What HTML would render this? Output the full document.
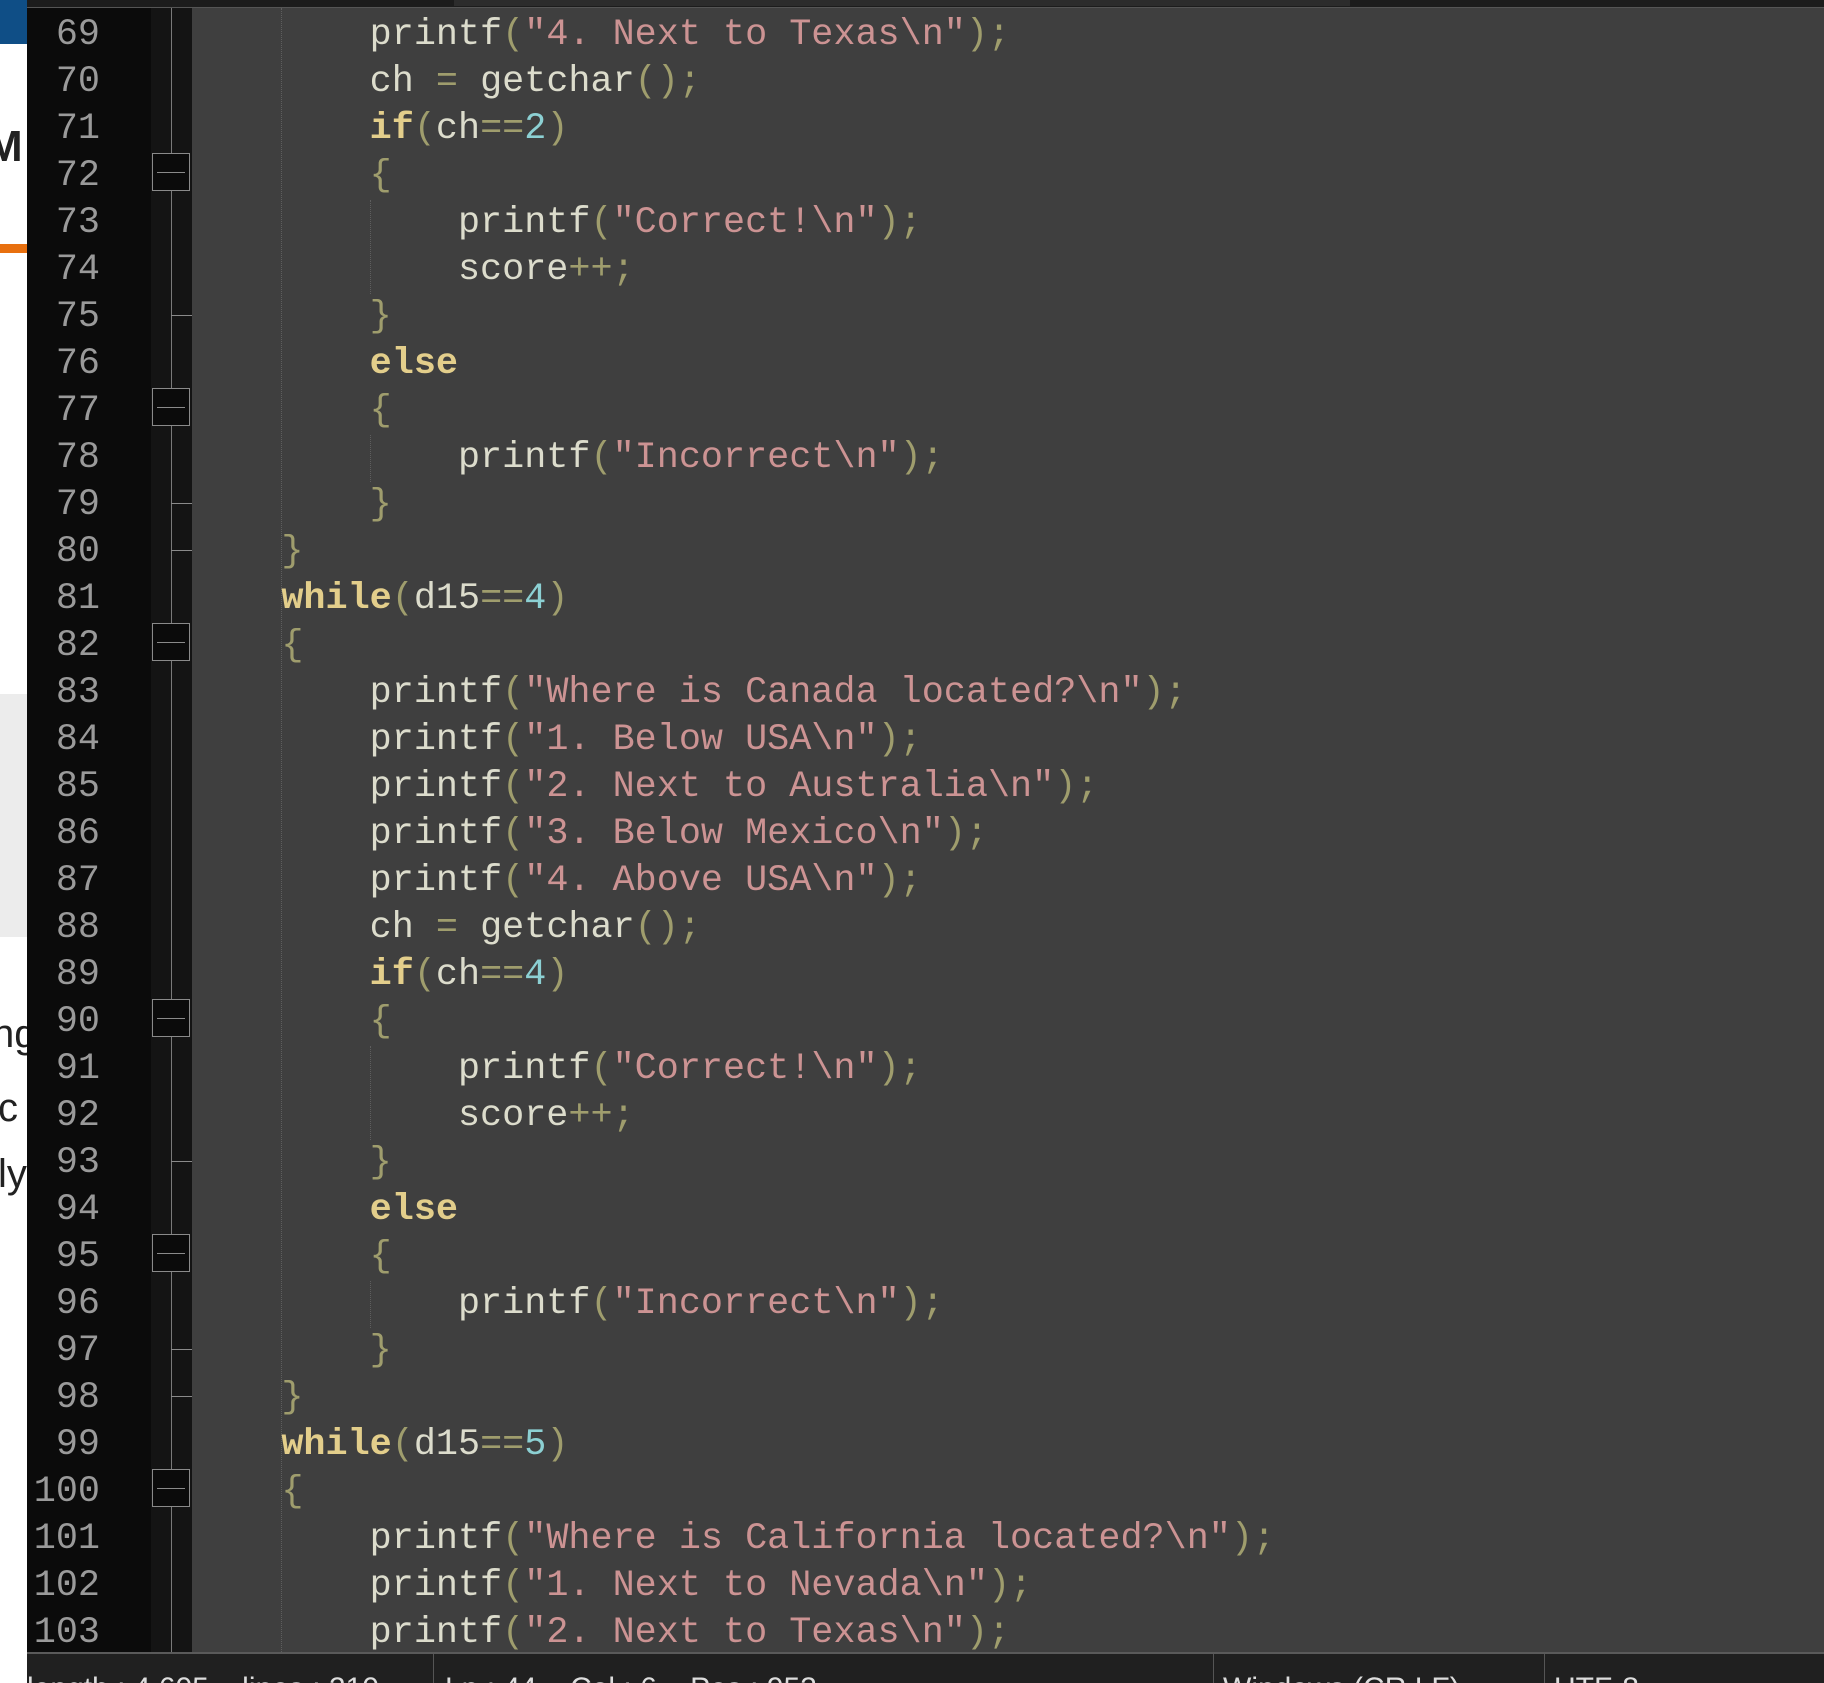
<!DOCTYPE html>
<html><head><meta charset="utf-8">
<style>
html,body{margin:0;padding:0;}
body{width:1824px;height:1683px;overflow:hidden;background:#3f3f3f;position:relative;font-family:"Liberation Mono",monospace;}
.abs{position:absolute;}
#left{left:0;top:0;width:27px;height:1683px;background:#fff;overflow:hidden;}
#gut{left:27px;top:8px;width:124px;height:1644px;background:#0b0b0b;}
#fold{left:151px;top:8px;width:41px;height:1644px;background:#141414;}
#code{left:192px;top:8px;width:1632px;height:1644px;background:#3f3f3f;}
#rows{position:absolute;left:0;top:4px;width:1824px;height:1648px;overflow:hidden;}
.row{position:absolute;height:47px;line-height:47px;font-size:36.8px;white-space:pre;}
.ln{left:27px;width:73px;text-align:right;color:#9a9a9a;}
.tx{left:193px;color:#dcdccc;}
.k{color:#e3ce8b;font-weight:bold;}
.p{color:#9f9d6d;}
.s{color:#cc9393;}
.n{color:#8cd0d3;}
.guide{position:absolute;width:0;border-left:1px dotted #5e5e5e;}
.fb{position:absolute;left:152px;width:38px;height:38px;border:1px solid #8a8a8a;background:#0b0b0b;box-sizing:border-box;}
.fb::after{content:"";position:absolute;left:4px;right:4px;top:18px;height:1px;background:#8a8a8a;}
.tick{position:absolute;left:171px;width:21px;height:1px;background:#8a8a8a;}
#status{left:27px;top:1652px;width:1797px;height:31px;background:#202020;border-top:2px solid #5a5a5a;box-sizing:border-box;overflow:hidden;}
#status span{position:absolute;top:18px;font-family:"Liberation Sans",sans-serif;font-size:30px;color:#ddd;white-space:pre;}
.sep{position:absolute;top:0;width:1px;height:31px;background:#555;}
</style></head><body>
<div class="abs" id="left">
  <div class="abs" style="left:0;top:0;width:27px;height:44px;background:#0f4e86"></div>
  <div class="abs" style="left:0;top:244px;width:27px;height:9px;background:#e8700f"></div>
  <div class="abs" style="left:0;top:694px;width:27px;height:243px;background:#ececec"></div>
  <div class="abs" style="left:-14px;top:122px;font:bold 44px 'Liberation Sans',sans-serif;color:#222">M</div>
  <div class="abs" style="left:-8px;top:1012px;font:40px 'Liberation Sans',sans-serif;color:#222">ng</div>
  <div class="abs" style="left:-2px;top:1086px;font:40px 'Liberation Sans',sans-serif;color:#222">c</div>
  <div class="abs" style="left:-2px;top:1152px;font:40px 'Liberation Sans',sans-serif;color:#222">ly</div>
</div>
<div class="abs" style="left:27px;top:0;width:1797px;height:8px;background:#1c1c1c;border-bottom:1px solid #555;box-sizing:border-box"></div>
<div class="abs" style="left:454px;top:0;width:896px;height:6px;background:#2c2c2c"></div>
<div class="abs" id="gut"></div>
<div class="abs" id="fold"></div>
<div class="abs" style="left:171px;top:8px;width:1px;height:1644px;background:#7a7a7a"></div>
<div class="abs" id="code"></div>

<div class="guide" style="left:281px;top:8px;height:1644px"></div>
<div class="guide" style="left:370px;top:200px;height:94px"></div>
<div class="guide" style="left:370px;top:435px;height:47px"></div>
<div class="guide" style="left:370px;top:1046px;height:94px"></div>
<div class="guide" style="left:370px;top:1281px;height:47px"></div>

<div class="fb" style="top:153px"></div>
<div class="fb" style="top:388px"></div>
<div class="fb" style="top:623px"></div>
<div class="fb" style="top:999px"></div>
<div class="fb" style="top:1234px"></div>
<div class="fb" style="top:1469px"></div>
<div class="tick" style="top:315px"></div>
<div class="tick" style="top:503px"></div>
<div class="tick" style="top:550px"></div>
<div class="tick" style="top:1161px"></div>
<div class="tick" style="top:1349px"></div>
<div class="tick" style="top:1396px"></div>

<div id="rows">
<div class="row ln" style="top:8px">69</div>
<div class="row ln" style="top:55px">70</div>
<div class="row ln" style="top:102px">71</div>
<div class="row ln" style="top:149px">72</div>
<div class="row ln" style="top:196px">73</div>
<div class="row ln" style="top:243px">74</div>
<div class="row ln" style="top:290px">75</div>
<div class="row ln" style="top:337px">76</div>
<div class="row ln" style="top:384px">77</div>
<div class="row ln" style="top:431px">78</div>
<div class="row ln" style="top:478px">79</div>
<div class="row ln" style="top:525px">80</div>
<div class="row ln" style="top:572px">81</div>
<div class="row ln" style="top:619px">82</div>
<div class="row ln" style="top:666px">83</div>
<div class="row ln" style="top:713px">84</div>
<div class="row ln" style="top:760px">85</div>
<div class="row ln" style="top:807px">86</div>
<div class="row ln" style="top:854px">87</div>
<div class="row ln" style="top:901px">88</div>
<div class="row ln" style="top:948px">89</div>
<div class="row ln" style="top:995px">90</div>
<div class="row ln" style="top:1042px">91</div>
<div class="row ln" style="top:1089px">92</div>
<div class="row ln" style="top:1136px">93</div>
<div class="row ln" style="top:1183px">94</div>
<div class="row ln" style="top:1230px">95</div>
<div class="row ln" style="top:1277px">96</div>
<div class="row ln" style="top:1324px">97</div>
<div class="row ln" style="top:1371px">98</div>
<div class="row ln" style="top:1418px">99</div>
<div class="row ln" style="top:1465px">100</div>
<div class="row ln" style="top:1512px">101</div>
<div class="row ln" style="top:1559px">102</div>
<div class="row ln" style="top:1606px">103</div>

<div class="row tx" style="top:8px">        printf<span class="p">(</span><span class="s">"4. Next to Texas\n"</span><span class="p">);</span></div>
<div class="row tx" style="top:55px">        ch <span class="p">=</span> getchar<span class="p">();</span></div>
<div class="row tx" style="top:102px">        <span class="k">if</span><span class="p">(</span>ch<span class="p">==</span><span class="n">2</span><span class="p">)</span></div>
<div class="row tx" style="top:149px">        <span class="p">{</span></div>
<div class="row tx" style="top:196px">            printf<span class="p">(</span><span class="s">"Correct!\n"</span><span class="p">);</span></div>
<div class="row tx" style="top:243px">            score<span class="p">++;</span></div>
<div class="row tx" style="top:290px">        <span class="p">}</span></div>
<div class="row tx" style="top:337px">        <span class="k">else</span></div>
<div class="row tx" style="top:384px">        <span class="p">{</span></div>
<div class="row tx" style="top:431px">            printf<span class="p">(</span><span class="s">"Incorrect\n"</span><span class="p">);</span></div>
<div class="row tx" style="top:478px">        <span class="p">}</span></div>
<div class="row tx" style="top:525px">    <span class="p">}</span></div>
<div class="row tx" style="top:572px">    <span class="k">while</span><span class="p">(</span>d15<span class="p">==</span><span class="n">4</span><span class="p">)</span></div>
<div class="row tx" style="top:619px">    <span class="p">{</span></div>
<div class="row tx" style="top:666px">        printf<span class="p">(</span><span class="s">"Where is Canada located?\n"</span><span class="p">);</span></div>
<div class="row tx" style="top:713px">        printf<span class="p">(</span><span class="s">"1. Below USA\n"</span><span class="p">);</span></div>
<div class="row tx" style="top:760px">        printf<span class="p">(</span><span class="s">"2. Next to Australia\n"</span><span class="p">);</span></div>
<div class="row tx" style="top:807px">        printf<span class="p">(</span><span class="s">"3. Below Mexico\n"</span><span class="p">);</span></div>
<div class="row tx" style="top:854px">        printf<span class="p">(</span><span class="s">"4. Above USA\n"</span><span class="p">);</span></div>
<div class="row tx" style="top:901px">        ch <span class="p">=</span> getchar<span class="p">();</span></div>
<div class="row tx" style="top:948px">        <span class="k">if</span><span class="p">(</span>ch<span class="p">==</span><span class="n">4</span><span class="p">)</span></div>
<div class="row tx" style="top:995px">        <span class="p">{</span></div>
<div class="row tx" style="top:1042px">            printf<span class="p">(</span><span class="s">"Correct!\n"</span><span class="p">);</span></div>
<div class="row tx" style="top:1089px">            score<span class="p">++;</span></div>
<div class="row tx" style="top:1136px">        <span class="p">}</span></div>
<div class="row tx" style="top:1183px">        <span class="k">else</span></div>
<div class="row tx" style="top:1230px">        <span class="p">{</span></div>
<div class="row tx" style="top:1277px">            printf<span class="p">(</span><span class="s">"Incorrect\n"</span><span class="p">);</span></div>
<div class="row tx" style="top:1324px">        <span class="p">}</span></div>
<div class="row tx" style="top:1371px">    <span class="p">}</span></div>
<div class="row tx" style="top:1418px">    <span class="k">while</span><span class="p">(</span>d15<span class="p">==</span><span class="n">5</span><span class="p">)</span></div>
<div class="row tx" style="top:1465px">    <span class="p">{</span></div>
<div class="row tx" style="top:1512px">        printf<span class="p">(</span><span class="s">"Where is California located?\n"</span><span class="p">);</span></div>
<div class="row tx" style="top:1559px">        printf<span class="p">(</span><span class="s">"1. Next to Nevada\n"</span><span class="p">);</span></div>
<div class="row tx" style="top:1606px">        printf<span class="p">(</span><span class="s">"2. Next to Texas\n"</span><span class="p">);</span></div>
</div>

<div class="abs" id="status">
  <span style="left:0">length : 4,605    lines : 210</span>
  <div class="sep" style="left:406px"></div>
  <span style="left:418px">Ln : 44    Col : 6    Pos : 953</span>
  <div class="sep" style="left:1186px"></div>
  <span style="left:1196px">Windows (CR LF)</span>
  <div class="sep" style="left:1517px"></div>
  <span style="left:1527px">UTF-8</span>
</div>
</body></html>
